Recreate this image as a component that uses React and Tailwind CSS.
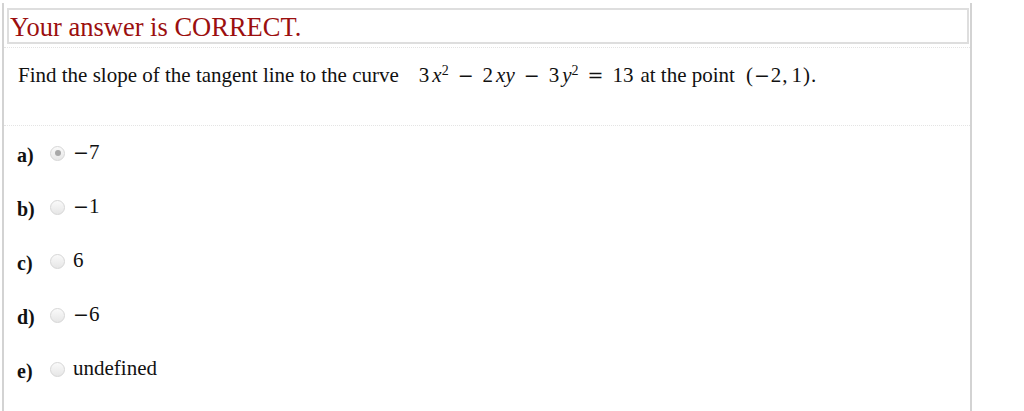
import React from 'react';

const OPTIONS = [
  { label: 'a)', value: '−7', minus: true, checked: true },
  { label: 'b)', value: '1', minus: true },
  { label: 'c)', value: '6' },
  { label: 'd)', value: '6', minus: true },
  { label: 'e)', value: 'undefined' },
];

const serif = { fontFamily: '"Liberation Serif", "Times New Roman", serif' };

function Radio({ checked }) {
  return (
    <span className="relative inline-block shrink-0 w-[15px] h-[15px] rounded-full border border-[#d6d6d6] bg-gradient-to-b from-[#fafafa] to-[#e6e6e6]">
      {checked && (
        <span className="absolute left-[3.5px] top-[3.5px] w-[6px] h-[6px] rounded-full bg-[#a8a8a8]" />
      )}
    </span>
  );
}

function V({ children }) {
  return <span className="italic ml-[3px]">{children}</span>;
}

// wider math minus / equals glyphs
function M({ children }) {
  return <span className="font-['DejaVu_Serif',serif] text-[19px]">{children}</span>;
}

function Op({ children }) {
  return <span className="mx-[9px]"><M>{children}</M></span>;
}

export default function App() {
  return (
    <div className="w-[1024px] h-[411px] bg-white overflow-hidden" style={serif}>
      <div className="ml-[2px] mt-[3px] w-[970px] h-[408px] border-l-2 border-r-2 border-[#d3d3d3]">
        <div className="pt-[5px] pl-[3px] pr-[1px]">
          <div className="h-[36px] border-2 border-[#dedede] flex items-center pl-[1px]">
            <span className="text-[26.5px] leading-none text-[#9b0f0f] mt-[2px]">Your answer is CORRECT.</span>
          </div>
        </div>
        <div className="mt-[3px] border-t border-dotted border-[#e4e4e4]" />
        <div className="h-[77px] pl-[14px] pt-[12px] text-[21px] text-[#111] whitespace-nowrap">
          Find the slope of the tangent line to the curve
          <span className="ml-[20px]">
            3<V>x</V><sup className="text-[14px]">2</sup>
            <Op>−</Op>2<V>xy</V>
            <Op>−</Op>3<V>y</V><sup className="text-[14px]">2</sup>
            <Op>=</Op>13
          </span>
          <span className="ml-[7px]">at the point</span>
          <span className="ml-[11px] tracking-[1px]">(<M>−</M>2,<span className="ml-[3px]">1)</span></span>.
        </div>
        <div className="border-t border-dotted border-[#e4e4e4]" />
        <div className="pl-[13px] pt-[15px] flex flex-col gap-[30px]">
          {OPTIONS.map(o => (
            <div key={o.label} className="h-[24px] flex items-center">
              <span className="w-[33px] font-bold text-[20px] text-[#111] mt-[4px]">{o.label}</span>
              <Radio checked={o.checked} />
              <span className="ml-[8px] text-[21px] text-[#111]">
                {o.minus && <M>−</M>}
                {o.minus ? o.value.replace('−', '') : o.value}
              </span>
            </div>
          ))}
        </div>
      </div>
    </div>
  );
}
